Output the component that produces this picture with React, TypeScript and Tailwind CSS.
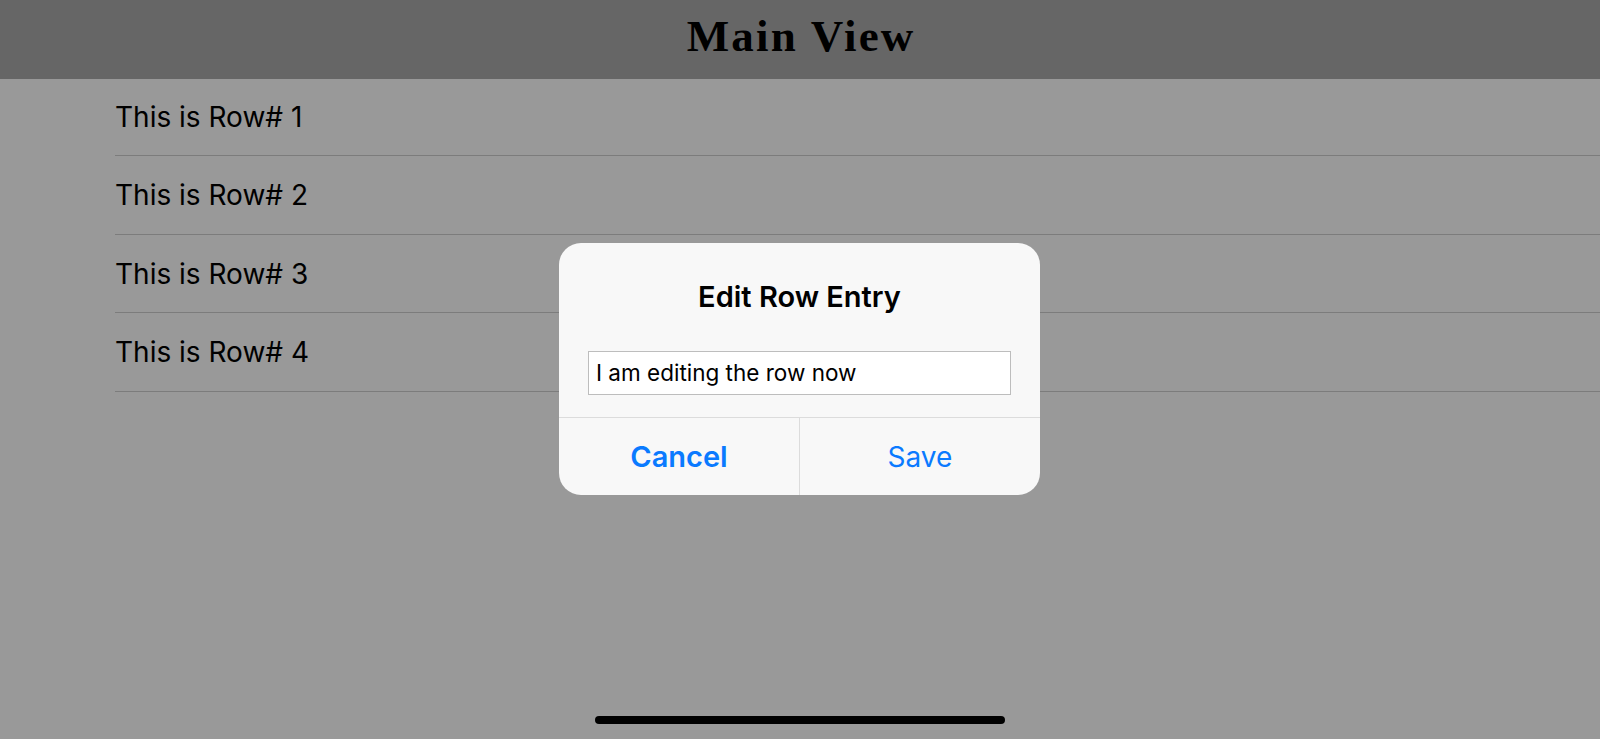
const rows = [
  { label: "This is Row# 1", h: "h-[77px]" },
  { label: "This is Row# 2", h: "h-[79px]" },
  { label: "This is Row# 3", h: "h-[78px]" },
  { label: "This is Row# 4", h: "h-[79px]" },
];

function EditDialog() {
  return (
    <div className="absolute left-[559px] top-[243px] w-[481px] h-[252px] rounded-[22px] bg-[#f8f8f8] flex flex-col overflow-hidden">
      <div className="h-[108px] flex items-center justify-center">
        <h2 className="text-[29px] font-semibold text-black">Edit Row Entry</h2>
      </div>
      <div className="px-[29px]">
        <div className="h-[44px] bg-white border border-[#bdbdbd] flex items-center px-[7px]">
          <span className="text-[22.5px] text-black">I am editing the row now</span>
        </div>
      </div>
      <div className="mt-[22px] flex-1 flex border-t border-[#dcdcdc]">
        <button className="flex-1 flex items-center justify-center text-[29px] font-semibold text-[#0a7aff] border-r border-[#dcdcdc]">
          Cancel
        </button>
        <button className="flex-1 flex items-center justify-center text-[28px] text-[#0a7aff]">
          Save
        </button>
      </div>
    </div>
  );
}

export default function App() {
  return (
    <div className="relative h-[739px] w-full bg-[#999999] overflow-hidden font-['Inter',sans-serif]">
      <header className="h-[79px] bg-[#666666] flex items-center justify-center">
        <h1 className="font-['Liberation_Serif',serif] font-bold text-[45px] tracking-[0.05em] text-black pb-[6px] pl-[0.05em]">
          Main View
        </h1>
      </header>

      <ul className="pl-[115px]">
        {rows.map(r => (
          <li
            key={r.label}
            className={`${r.h} flex items-center border-b border-[#7c7c7c] text-[28px] text-black`}
          >
            {r.label}
          </li>
        ))}
      </ul>

      <EditDialog />

      <div className="absolute left-[595px] top-[716px] w-[410px] h-[8px] rounded-full bg-black" />
    </div>
  );
}
